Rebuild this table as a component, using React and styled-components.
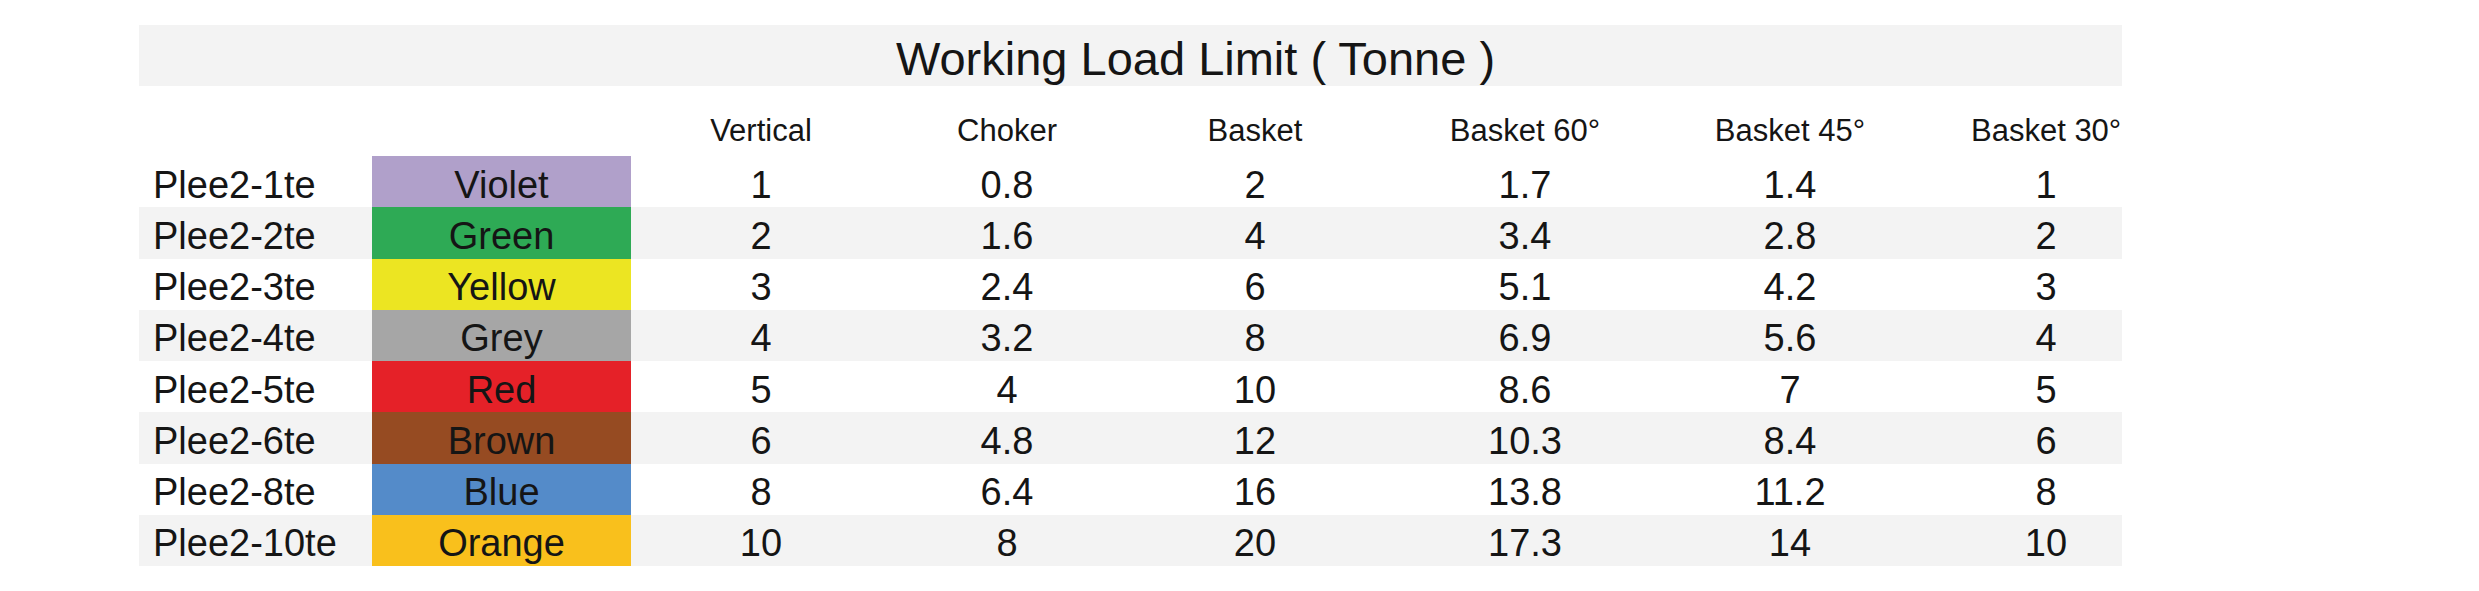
import React from 'react';
import styled, { createGlobalStyle } from 'styled-components';

const GlobalStyle = createGlobalStyle`
  html, body {
    margin: 0;
    padding: 0;
    background: #ffffff;
  }
  body {
    font-family: 'Liberation Sans', Arial, Helvetica, sans-serif;
    color: #151515;
  }
`;

const COLUMNS = '233px 259px 260px 232px 264px 276px 254px 204px';

const Page = styled.div`
  width: 1983px;
  padding: 25px 0 0 139px;
`;

const TitleBar = styled.div`
  height: 61px;
  box-sizing: border-box;
  padding: 6px 0 0 130px;
  background: #f3f3f3;
  display: flex;
  align-items: center;
  justify-content: center;
  font-size: 47px;
  line-height: 1;
`;

const HeaderRow = styled.div`
  display: grid;
  grid-template-columns: ${COLUMNS};
  height: 70px;
  box-sizing: border-box;
  padding-bottom: 10px;
  align-items: end;
`;

const HeaderCell = styled.div`
  text-align: center;
  font-size: 31px;
  line-height: 31px;
  white-space: nowrap;

  &:last-child {
    padding-left: 54px;
  }
`;

const Row = styled.div`
  display: grid;
  grid-template-columns: ${COLUMNS};
  height: 51.25px;
  background: ${(p) => (p.$striped ? '#f3f3f3' : 'transparent')};
`;

const Cell = styled.div`
  display: flex;
  align-items: center;
  justify-content: center;
  box-sizing: border-box;
  padding-top: 6px;
  font-size: 38px;
  line-height: 1;
  white-space: nowrap;

  &:last-child {
    padding-left: 54px;
  }
`;

const NameCell = styled(Cell)`
  justify-content: flex-start;
  padding-left: 14px;
`;

const Swatch = styled(Cell)`
  background: ${(p) => p.$color};
`;

const headers = ['Vertical', 'Choker', 'Basket', 'Basket 60°', 'Basket 45°', 'Basket 30°'];

const slings = [
  { name: 'Plee2-1te', colour: 'Violet', hex: '#b0a0ca', loads: ['1', '0.8', '2', '1.7', '1.4', '1'] },
  { name: 'Plee2-2te', colour: 'Green', hex: '#2eaa55', loads: ['2', '1.6', '4', '3.4', '2.8', '2'] },
  { name: 'Plee2-3te', colour: 'Yellow', hex: '#ece522', loads: ['3', '2.4', '6', '5.1', '4.2', '3'] },
  { name: 'Plee2-4te', colour: 'Grey', hex: '#a6a6a6', loads: ['4', '3.2', '8', '6.9', '5.6', '4'] },
  { name: 'Plee2-5te', colour: 'Red', hex: '#e52128', loads: ['5', '4', '10', '8.6', '7', '5'] },
  { name: 'Plee2-6te', colour: 'Brown', hex: '#964b22', loads: ['6', '4.8', '12', '10.3', '8.4', '6'] },
  { name: 'Plee2-8te', colour: 'Blue', hex: '#548bc9', loads: ['8', '6.4', '16', '13.8', '11.2', '8'] },
  { name: 'Plee2-10te', colour: 'Orange', hex: '#f9c01c', loads: ['10', '8', '20', '17.3', '14', '10'] },
];

export default function App() {
  return (
    <>
      <GlobalStyle />
      <Page>
        <TitleBar>Working Load Limit ( Tonne )</TitleBar>
        <HeaderRow>
          <HeaderCell />
          <HeaderCell />
          {headers.map((h) => (
            <HeaderCell key={h}>{h}</HeaderCell>
          ))}
        </HeaderRow>
        {slings.map((s, i) => (
          <Row key={s.name} $striped={i % 2 === 1}>
            <NameCell>{s.name}</NameCell>
            <Swatch $color={s.hex}>{s.colour}</Swatch>
            {s.loads.map((v, j) => (
              <Cell key={j}>{v}</Cell>
            ))}
          </Row>
        ))}
      </Page>
    </>
  );
}
